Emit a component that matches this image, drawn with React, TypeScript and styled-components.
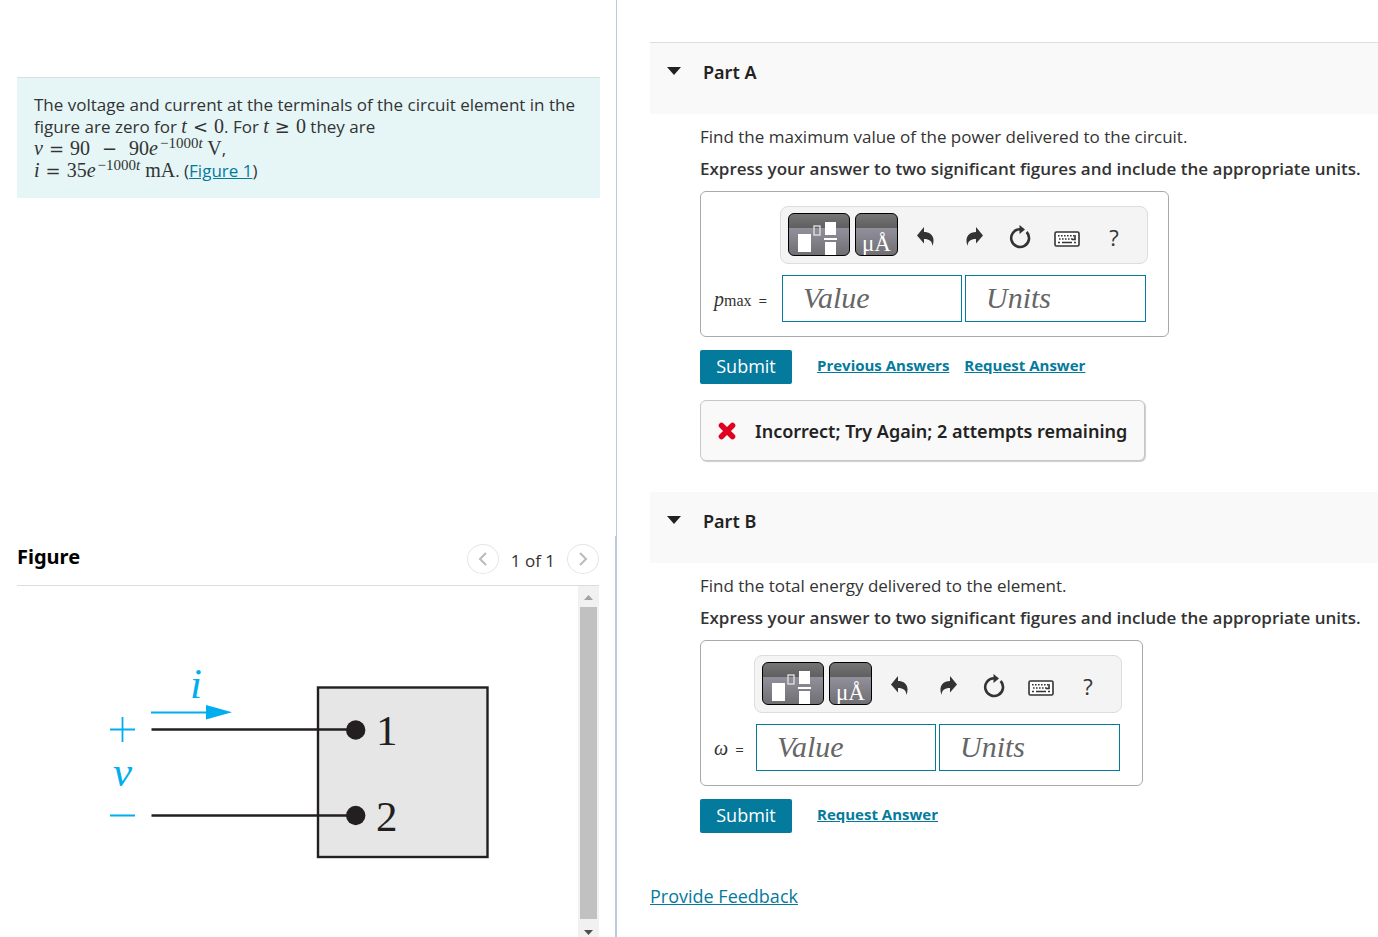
import React from "react";
import styled, { createGlobalStyle } from "styled-components";

const sans = `"Open Sans", "Noto Sans", sans-serif`;
const heading = `"Noto Sans", "Open Sans", sans-serif`;
const serif = `"Liberation Serif", "Times New Roman", serif`;
const teal = "#047a9c";

const GlobalStyle = createGlobalStyle`
  *, *::before, *::after { box-sizing: border-box; }
  body { margin: 0; background: #fff; color: #333; font: 17px/22px ${sans}; }
  p, h2, h3 { margin: 0; }
  a { color: ${teal}; }
`;

const Page = styled.div`
  display: grid;
  grid-template-columns: 617fr 761fr;
  height: 100vh;
  overflow: hidden;
`;

const Side = styled.aside`
  display: grid;
  grid-template-rows: 536fr 401fr;
  min-height: 0;
`;

const ProblemPane = styled.section`
  padding: 77px 16px 0 17px;
  border-right: 1px solid #b9cbdd;
`;

const Problem = styled.div`
  padding: 16px 17px;
  border-top: 1px solid #d3e2e2;
  background: #e6f6f7;
`;

const Tex = styled.span`
  font-family: ${serif};
  font-size: 20px;
  line-height: 16px;
  white-space: nowrap;
  sup {
    margin-left: 2px;
    font-size: 15px;
    line-height: 0;
    vertical-align: 7px;
  }
`;

const Op = styled.span<{ $gap?: number }>`
  margin: 0 ${(p) => p.$gap ?? 6}px;
  font-family: "DejaVu Sans", sans-serif;
  font-size: 18px;
  line-height: 0;
`;

const FigurePane = styled.section`
  display: flex;
  flex-direction: column;
  min-height: 0;
  padding: 0 16px 0 17px;
  border-right: 2px solid #b9cbdd;
`;

const FigureHead = styled.header`
  display: flex;
  justify-content: space-between;
  flex: none;
  height: 50px;
  padding-top: 8px;
  border-bottom: 1px solid #dcdcdc;
`;

const FigureTitle = styled.h2`
  color: #000;
  font-family: ${heading};
  font-size: 20px;
  font-weight: 700;
  line-height: 26px;
`;

const Pager = styled.nav`
  display: flex;
  gap: 12px;
  line-height: 34px;
`;

const PagerButton = styled.button`
  display: grid;
  place-items: center;
  width: 32px;
  height: 30px;
  padding: 0;
  border: 1px solid #e6e6e6;
  border-radius: 50%;
  background: #fff;
`;

const FigureBody = styled.div`
  display: flex;
  justify-content: space-between;
  flex: 1;
  min-height: 0;
  overflow: hidden;
`;

const Circuit = styled.svg`
  flex: none;
  width: 400px;
  height: 210px;
  margin: 74px 0 0 83px;
`;

const Track = styled.div`
  display: flex;
  flex-direction: column;
  align-items: center;
  gap: 9px;
  width: 21px;
  padding-top: 9px;
  background: #f1f1f1;
`;

const Thumb = styled.div`
  flex: none;
  width: 17px;
  height: 312px;
  margin: -2px 0 2px;
  background: #c1c1c1;
`;

const ScrollArrow = styled.svg`
  flex: none;
  width: 9px;
  height: 5px;
`;

const Main = styled.main`
  min-width: 0;
  padding: 42px 0 0 33px;
`;

const PartHead = styled.header<{ $ruled?: boolean }>`
  display: flex;
  gap: 22px;
  height: ${(p) => (p.$ruled ? 72 : 71)}px;
  padding: 17px 16px 0;
  border-top: ${(p) => (p.$ruled ? "1px solid #dcdcdc" : "none")};
  background: #f9f9f9;
`;

const Toggle = styled.button`
  display: grid;
  place-items: center;
  width: 15px;
  height: 22px;
  padding: 0;
  border: 0;
  background: none;
`;

const PartTitle = styled.h3`
  color: #222;
  font-family: ${heading};
  font-size: 18px;
  font-weight: 600;
  line-height: 24px;
`;

const PartBody = styled.div`
  padding: 12px 0 31px 50px;
`;

const Question = styled.p`
  margin-bottom: 10px;
  white-space: nowrap;
`;

const Hint = styled.p`
  margin-bottom: 11px;
  font-weight: 600;
  white-space: nowrap;
`;

const AnswerBox = styled.div<{ $label: number }>`
  display: inline-grid;
  grid-template-columns: ${(p) => p.$label}px 368px;
  row-gap: 11px;
  padding: 14px 20px 14px 13px;
  border: 1px solid #a9a9a9;
  border-radius: 6px;
  vertical-align: top;
`;

const Toolbar = styled.div`
  grid-column: 2;
  display: flex;
  align-items: flex-start;
  height: 58px;
  padding: 6px 7px 0;
  border: 1px solid #ddd;
  border-radius: 8px;
  background: #f4f4f4;
`;

const PadButton = styled.button<{ $width: number }>`
  width: ${(p) => p.$width}px;
  height: 43px;
  margin-right: 5px;
  padding: 0;
  overflow: hidden;
  border: 1px solid #000;
  border-radius: 6px;
  background: linear-gradient(#757575, #5f5f5f 14px, #92909b 14px, #706f73);
  color: #fff;
  font: 23px/60px ${serif};
  svg { display: block; }
`;

const Tools = styled.div`
  display: flex;
  flex: 1;
  justify-content: space-between;
  padding: 11px 13px 0 10px;
`;

const Tool = styled.button`
  display: grid;
  place-items: center;
  width: 26px;
  height: 26px;
  padding: 0;
  border: 0;
  background: none;
  color: #333;
  font: 22px/22px ${sans};
`;

const Variable = styled.label`
  display: flex;
  align-items: baseline;
  gap: 7px;
  align-self: center;
  padding-top: 3px;
  font: 15px/20px ${sans};
`;

const VariableName = styled.span`
  font: 16px/20px ${serif};
  i { font-size: 20px; }
`;

const Fields = styled.div`
  display: grid;
  grid-template-columns: 180px 1fr;
  gap: 3px;
  padding: 0 2px;
`;

const Field = styled.input`
  min-width: 0;
  width: 100%;
  height: 47px;
  padding: 0 20px 2px;
  border: 1px solid ${teal};
  border-radius: 0;
  font: italic 30px/44px ${serif};
  &::placeholder { color: #666; opacity: 1; }
`;

const Actions = styled.div`
  display: flex;
  gap: 15px;
  margin-top: 13px;
  font-size: 15px;
  font-weight: 700;
  line-height: 30px;
`;

const Submit = styled.button`
  width: 92px;
  height: 34px;
  margin-right: 10px;
  padding: 0 0 2px;
  border: 0;
  border-radius: 2px;
  background: ${teal};
  color: #fff;
  font: 18px/32px ${sans};
`;

const Feedback = styled.div`
  display: inline-flex;
  align-items: center;
  gap: 19px;
  height: 61px;
  margin-top: 16px;
  padding: 0 17px;
  border: 1px solid #c7c7c7;
  border-radius: 6px;
  background: #f9f9f9;
  box-shadow: 1px 1px 1px #ccc;
  color: #222;
  font-family: ${heading};
  font-size: 18px;
  font-weight: 600;
  vertical-align: top;
  white-space: nowrap;
`;

const FootLink = styled.a`
  display: inline-block;
  margin-top: 20px;
  font-size: 18px;
  line-height: 24px;
`;

function TemplatesIcon() {
  return (
    <svg width="60" height="41" viewBox="0 0 60 41">
      <g fill="#fff">
        <rect x="9" y="20" width="13" height="18" />
        <rect x="36" y="8" width="11" height="13" />
        <rect x="36" y="28" width="11" height="13" />
        <rect x="35" y="24" width="13" height="2" />
      </g>
      <rect x="25" y="12" width="6" height="9" fill="none" stroke="#ddd" strokeWidth="1.4" />
    </svg>
  );
}

const bend = "M7 0v5c6 0 12 4 8.500 14-.5-5-3-7-8.500-7v4.500L0 8.500Z";

function UndoIcon() {
  return <svg width="18" height="20" viewBox="0 0 18 20"><path fill="#333" d={bend} /></svg>;
}

function RedoIcon() {
  return (
    <svg width="20" height="20" viewBox="-2 0 20 20">
      <path fill="#333" transform="matrix(-1 0 0 1 18 0)" d={bend} />
    </svg>
  );
}

function ResetIcon() {
  return (
    <svg width="22" height="24" viewBox="0 0 22 24">
      <path fill="none" stroke="#333" strokeWidth="2.600" d="M17.600 7A8.900 8.900 0 1 1 11 4.200" />
      <path fill="#333" d="M10.500 0 16 4.500 10.500 9Z" />
    </svg>
  );
}

function KeyboardIcon() {
  return (
    <svg width="26" height="22" viewBox="0 0 26 22">
      <g transform="translate(0 2)">
        <rect x="1" y="4" width="24" height="14" rx="1.500" fill="#fff" stroke="#333" strokeWidth="1.600" />
        <g stroke="#333" strokeWidth="1.600">
          <path strokeDasharray="1.600 1.400" d="M4 7.800H20" />
          <path strokeDasharray="1.600 1.400" d="M5 11H19" />
          <path d="M4 14.500h2M8 14.500h10M20 14.500h2M21 7v4.500h-3" fill="none" />
        </g>
      </g>
    </svg>
  );
}

function WrongIcon() {
  return (
    <svg width="18" height="18" viewBox="0 0 18 18">
      <path d="M3.500 3.500 14.500 14.500M14.500 3.500 3.500 14.500" stroke="#e00020" strokeWidth="5.600" strokeLinecap="round" />
    </svg>
  );
}

function Chevron({ d }: { d: string }) {
  return (
    <svg width="10" height="16" viewBox="0 0 10 16">
      <path d={d} fill="none" stroke="#bbb" strokeWidth="2" />
    </svg>
  );
}

function CircuitDrawing() {
  return (
    <Circuit viewBox="100 660 400 210" role="img" aria-label="Circuit element with terminals 1 and 2">
      <rect x="318" y="687.500" width="169.500" height="169.500" fill="#e6e6e6" stroke="#231f20" strokeWidth="2.400" />
      <path d="M151.500 729.500H350M151.500 815.500H350" stroke="#231f20" strokeWidth="2.400" />
      <circle cx="355.700" cy="730" r="9.700" fill="#231f20" />
      <circle cx="355.700" cy="815.500" r="9.700" fill="#231f20" />
      <g stroke="#00aeef" strokeWidth="1.800">
        <path d="M151 712.500H208" />
        <path d="M110 729.500H135M122.500 717V742M110 815.500H135" />
      </g>
      <path d="M206 705 232 712.300 206 719.500Z" fill="#00aeef" />
      <g fontFamily='"Liberation Serif", serif' fontSize="43">
        <g fill="#00aeef" fontStyle="italic">
          <text x="190" y="698">i</text>
          <text x="113" y="786">v</text>
        </g>
        <text x="376" y="745" fill="#231f20">1</text>
        <text x="376" y="831" fill="#231f20">2</text>
      </g>
    </Circuit>
  );
}

function AnswerEditor({ id, label, children }: { id: string; label: number; children: React.ReactNode }) {
  return (
    <AnswerBox $label={label}>
      <Toolbar role="toolbar" aria-label="Answer tools">
        <PadButton $width={62} aria-label="Templates"><TemplatesIcon /></PadButton>
        <PadButton $width={43} aria-label="Units">μÅ</PadButton>
        <Tools>
          <Tool aria-label="Undo"><UndoIcon /></Tool>
          <Tool aria-label="Redo"><RedoIcon /></Tool>
          <Tool aria-label="Reset"><ResetIcon /></Tool>
          <Tool aria-label="Keyboard shortcuts"><KeyboardIcon /></Tool>
          <Tool aria-label="Help">?</Tool>
        </Tools>
      </Toolbar>
      <Variable htmlFor={`${id}-value`}><VariableName>{children}</VariableName>=</Variable>
      <Fields>
        <Field id={`${id}-value`} placeholder="Value" />
        <Field aria-label="Units" placeholder="Units" />
      </Fields>
    </AnswerBox>
  );
}

function PartHeading({ title, ruled }: { title: string; ruled?: boolean }) {
  return (
    <PartHead $ruled={ruled}>
      <Toggle aria-label={`Collapse ${title}`}>
        <svg width="14" height="8" viewBox="0 0 14 8"><path d="M0 0H14L7 8Z" fill="#222" /></svg>
      </Toggle>
      <PartTitle>{title}</PartTitle>
    </PartHead>
  );
}

export default function App() {
  return (
    <>
      <GlobalStyle />
      <Page>
        <Side>
          <ProblemPane>
            <Problem>
              <p>
                The voltage and current at the terminals of the circuit element in the figure are zero for{" "}
                <Tex><i>t</i><Op>{"<"}</Op>0</Tex>. For <Tex><i>t</i><Op>≥</Op>0</Tex> they are
              </p>
              <p><Tex><i>v</i><Op>=</Op>90<Op $gap={12}>−</Op>90<i>e</i><sup>−1000<i>t</i></sup> V</Tex>,</p>
              <p>
                <Tex><i>i</i><Op>=</Op>35<i>e</i><sup>−1000<i>t</i></sup> mA</Tex>. (<a href="#figure">Figure 1</a>)
              </p>
            </Problem>
          </ProblemPane>
          <FigurePane id="figure">
            <FigureHead>
              <FigureTitle>Figure</FigureTitle>
              <Pager aria-label="Figures">
                <PagerButton aria-label="Previous figure"><Chevron d="M8 2 2 8 8 14" /></PagerButton>
                <span>1 of 1</span>
                <PagerButton aria-label="Next figure"><Chevron d="M2 2 8 8 2 14" /></PagerButton>
              </Pager>
            </FigureHead>
            <FigureBody>
              <CircuitDrawing />
              <Track>
                <ScrollArrow viewBox="0 0 9 5"><path d="M0 5H9L4.500 0Z" fill="#a3a3a3" /></ScrollArrow>
                <Thumb />
                <ScrollArrow viewBox="0 0 9 5"><path d="M0 0H9L4.500 5Z" fill="#505050" /></ScrollArrow>
              </Track>
            </FigureBody>
          </FigurePane>
        </Side>
        <Main>
          <section>
            <PartHeading title="Part A" ruled />
            <PartBody>
              <Question>Find the maximum value of the power delivered to the circuit.</Question>
              <Hint>Express your answer to two significant figures and include the appropriate units.</Hint>
              <AnswerEditor id="a" label={66}><i>p</i>max</AnswerEditor>
              <Actions>
                <Submit>Submit</Submit>
                <a href="#previous">Previous Answers</a>
                <a href="#request-a">Request Answer</a>
              </Actions>
              <Feedback role="status"><WrongIcon />Incorrect; Try Again; 2 attempts remaining</Feedback>
            </PartBody>
          </section>
          <section>
            <PartHeading title="Part B" />
            <PartBody>
              <Question>Find the total energy delivered to the element.</Question>
              <Hint>Express your answer to two significant figures and include the appropriate units.</Hint>
              <AnswerEditor id="b" label={40}><i>ω</i></AnswerEditor>
              <Actions>
                <Submit>Submit</Submit>
                <a href="#request-b">Request Answer</a>
              </Actions>
            </PartBody>
          </section>
          <FootLink href="#feedback">Provide Feedback</FootLink>
        </Main>
      </Page>
    </>
  );
}
